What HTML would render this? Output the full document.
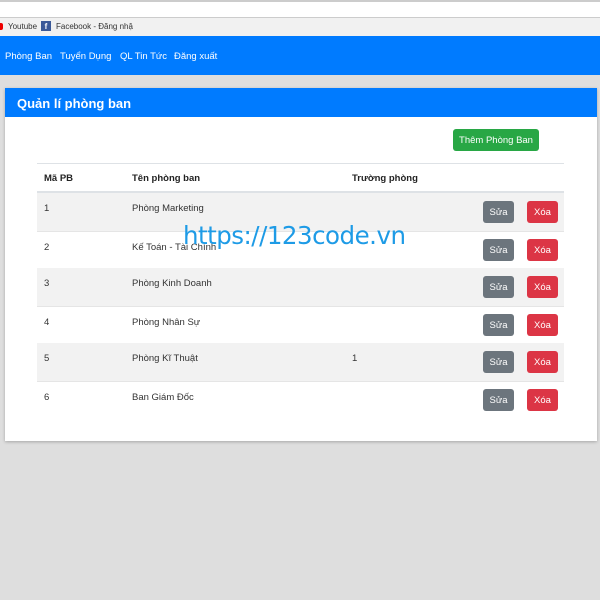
<!DOCTYPE html>
<html><head><meta charset="utf-8"><style>
*{margin:0;padding:0;box-sizing:border-box}
body{width:600px;height:600px;overflow:hidden;background:#dedede;font-family:"Liberation Sans",sans-serif;position:relative}
.top{position:absolute;left:0;top:0;width:600px;height:18px;background:#fff;border-top:2px solid #ccc;border-bottom:1px solid #ccc}
.bm{position:absolute;left:0;top:18px;width:600px;height:18px;background:#f1f1f1;font-size:8px;color:#333}
.nav{position:absolute;left:0;top:36px;width:600px;height:39px;background:#007bff;color:#fff;font-size:9.5px}
.nav span{position:absolute;top:15px}
.card{position:absolute;left:5px;top:88px;width:592px;height:353px;background:#fff;box-shadow:0 1px 3px rgba(0,0,0,.25)}
.ch{height:29px;background:#007bff;color:#fff;font-weight:bold;font-size:13px;padding:8px 0 0 12px}
.btn{position:absolute;color:#fff;font-size:9.5px;border-radius:3px;display:flex;align-items:center;justify-content:center;height:22px}
.row{position:absolute;left:32px;width:527px;height:38px;font-size:9.5px;color:#333}
.row span{position:absolute;top:10px}
.s{background:#6c757d;width:31px}.x{background:#dc3545;width:31px}
</style></head><body>
<div class="top"></div>
<div class="bm"><span style="position:absolute;left:-3px;top:5px;width:6px;height:7px;background:#e00;border-radius:2px"></span><span style="position:absolute;left:8px;top:4px">Youtube</span><span style="position:absolute;left:41px;top:3px;width:10px;height:10px;background:#3b5998;color:#fff;font-size:8px;font-weight:bold;text-align:center;line-height:11px">f</span><span style="position:absolute;left:56px;top:4px">Facebook - Đăng nhậ</span></div>
<div class="nav"><span style="left:5px">Phòng Ban</span><span style="left:60px">Tuyển Dụng</span><span style="left:120px">QL Tin Tức</span><span style="left:174px">Đăng xuất</span></div>
<div class="card"><div class="ch">Quản lí phòng ban</div>
<div class="btn" style="left:448px;top:41px;width:86px;background:#28a745">Thêm Phòng Ban</div>
<div class="row" style="top:75px;height:30px;border-top:1px solid #dee2e6;border-bottom:2px solid #dee2e6;font-weight:bold;color:#222"><span style="left:7px;top:9px">Mã PB</span><span style="left:95px;top:9px">Tên phòng ban</span><span style="left:315px;top:9px">Trường phòng</span></div>
<div class="row" style="top:105px;background:#f2f2f2"><span style="left:7px">1</span><span style="left:95px">Phòng Marketing</span><div class="btn s" style="left:446px;top:8px">Sửa</div><div class="btn x" style="left:490px;top:8px">Xóa</div></div>
<div class="row" style="top:143px;border-top:1px solid #e5e5e5"><span style="left:7px">2</span><span style="left:95px">Kế Toán - Tài Chính</span><div class="btn s" style="left:446px;top:7px">Sửa</div><div class="btn x" style="left:490px;top:7px">Xóa</div></div>
<div class="row" style="top:180px;background:#f2f2f2"><span style="left:7px">3</span><span style="left:95px">Phòng Kinh Doanh</span><div class="btn s" style="left:446px;top:8px">Sửa</div><div class="btn x" style="left:490px;top:8px">Xóa</div></div>
<div class="row" style="top:218px;border-top:1px solid #e5e5e5"><span style="left:7px">4</span><span style="left:95px">Phòng Nhân Sự</span><div class="btn s" style="left:446px;top:7px">Sửa</div><div class="btn x" style="left:490px;top:7px">Xóa</div></div>
<div class="row" style="top:255px;background:#f2f2f2"><span style="left:7px">5</span><span style="left:95px">Phòng Kĩ Thuật</span><span style="left:315px">1</span><div class="btn s" style="left:446px;top:8px">Sửa</div><div class="btn x" style="left:490px;top:8px">Xóa</div></div>
<div class="row" style="top:293px;border-top:1px solid #e5e5e5"><span style="left:7px">6</span><span style="left:95px">Ban Giám Đốc</span><div class="btn s" style="left:446px;top:7px">Sửa</div><div class="btn x" style="left:490px;top:7px">Xóa</div></div>
</div>
<div style="position:absolute;left:183px;top:221px;font-size:24.5px;color:#1e9be6;font-family:'DejaVu Sans',sans-serif;letter-spacing:-0.5px">https://123code.vn</div>
</body></html>
